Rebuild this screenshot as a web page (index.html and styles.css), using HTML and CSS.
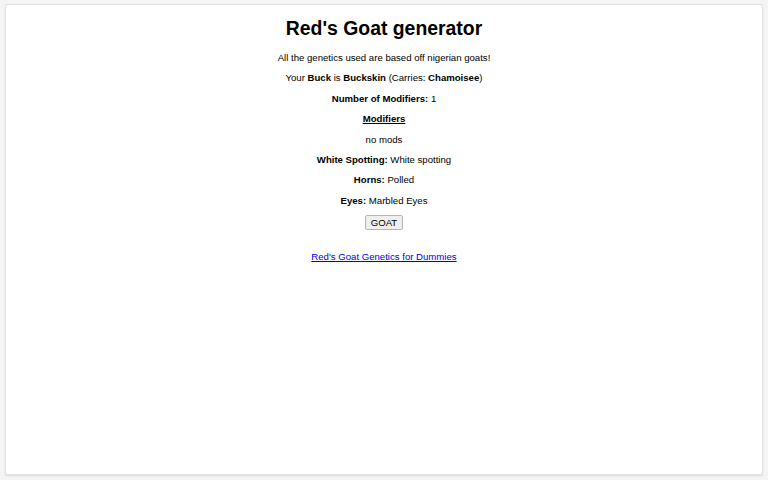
FILE: index.html
```html
<!DOCTYPE html>
<html lang="en">
<head>
    <meta charset="UTF-8">
    <meta name="viewport" content="width=device-width, initial-scale=1.0">
    <title>Red's Goat generator</title>
    <link rel="stylesheet" href="styles.css">
</head>
<body>
    <div class="container">
        <h1>Red's Goat generator</h1>
        <p>All the genetics used are based off nigerian goats!</p>

        <!-- Result of the last roll -->
        <p>Your <b>Buck</b> is <b>Buckskin</b> (Carries: <b>Chamoisee</b>)</p>
        <p><b>Number of Modifiers:</b> 1</p>
        <p><b><u>Modifiers</u></b></p>
        <p>no mods</p>
        <p><b>White Spotting:</b> White spotting</p>
        <p><b>Horns:</b> Polled</p>
        <p><b>Eyes:</b> Marbled Eyes</p>

        <button type="button" class="goat-btn">GOAT</button>

        <p class="guide"><a href="#">Red's Goat Genetics for Dummies</a></p>
    </div>
</body>
</html>
```

FILE: styles.css
```css
body {
    font-family: "Liberation Sans", Arial, sans-serif;
    font-size: 9.6px;
    margin: 0;
    padding: 4px 5px 5px 5px;
    background-color: #f4f4f4;
    color: #000;
}

.container {
    height: 471px;
    box-sizing: border-box;
    background-color: #fff;
    border: 1px solid #e2e2e2;
    border-radius: 2px;
    box-shadow: 0 1px 2px rgba(0, 0, 0, 0.12);
    text-align: center;
    padding-top: 12px;
}

h1 {
    font-size: 19.4px;
    margin: 0 0 12px 0;
}

p {
    margin: 0 0 8px 0;
    line-height: 12.4px;
}

.goat-btn {
    font-family: "Liberation Sans", Arial, sans-serif;
    font-size: 9.6px;
    padding: 1px 5px;
    background-color: #efefef;
    border: 1px solid #b5b5b5;
    border-radius: 2px;
}

.guide {
    margin-top: 21px;
}

a {
    color: #0000ee;
}
```
